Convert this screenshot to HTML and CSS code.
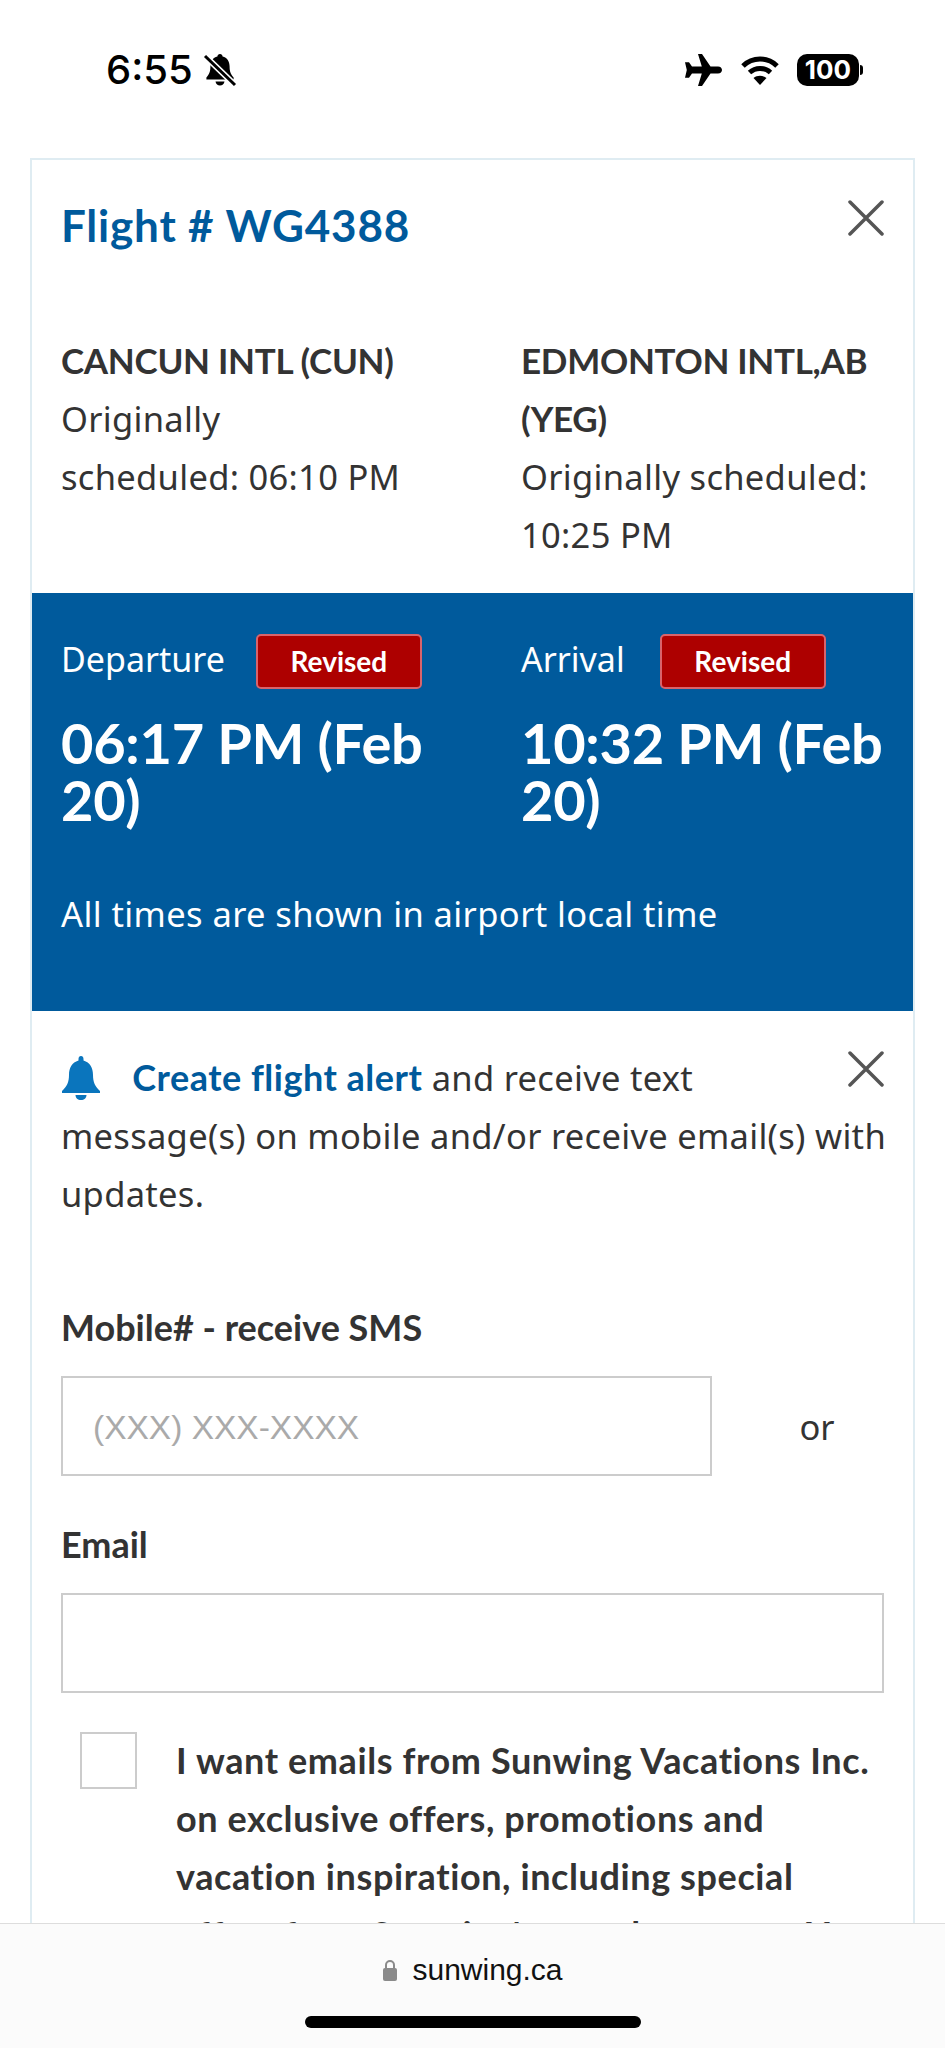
FILE: index.html
```html
<!DOCTYPE html>
<html lang="en">
  <head>
    <meta charset="UTF-8" />
    <meta name="viewport" content="width=device-width, initial-scale=1" />
    <title>Flight # WG4388</title>
    <link rel="stylesheet" href="styles.css">
  </head>
  <body>
    <header class="status-bar">
      <div class="status-left">
        <span class="clock">6:55</span>
        <svg class="icon-silent" viewBox="0 0 34 34" width="34" height="34">
          <path d="M17 1c1.500 0 2.500 1 2.600 2.400 4.600 1.200 7 5 7 10 0 5 1 7.500 4 11.100v2H3.400v-2c3-3.600 4-6.100 4-11.100 0-5 2.400-8.800 7-10C14.500 2 15.500 1 17 1zM12.500 28.500h9c-.4 2.500-2.200 4-4.500 4s-4.100-1.500-4.500-4z" fill="#000"/>
          <path d="M2 3l30 29" stroke="#fff" stroke-width="6"/>
          <path d="M2 3l30 29" stroke="#000" stroke-width="3"/>
        </svg>
      </div>
      <div class="status-right">
        <svg viewBox="0 0 40 34" width="40" height="34">
          <path d="M15 1h4l8.500 12.500H35c2.500 0 4 1.600 4 3.500s-1.500 3.500-4 3.500h-7.500L19 33h-4l3.800-12.500H9l-3 4.200H2L3.800 17 2 9.300h4L9 13.500h9.800z" fill="#000"/>
        </svg>
        <svg viewBox="0 0 40 30" width="40" height="30">
          <path d="M3 11c9.500-9.300 24.500-9.300 34 0" fill="none" stroke="#000" stroke-width="5"/>
          <path d="M9.500 17.500c6-5.400 15-5.400 21 0" fill="none" stroke="#000" stroke-width="5"/>
          <path d="M20 30l-6.500-7c3.600-3 9.400-3 13 0z" fill="#000"/>
        </svg>
        <div class="battery"><span class="battery-level">100</span><i class="battery-tip"></i></div>
      </div>
    </header>

    <main class="card">
      <div class="card-head">
        <h1>Flight # WG4388</h1>
        <svg class="close" viewBox="0 0 36 36" width="36" height="36">
          <path d="M2 2l32 32M34 2L2 34" stroke="#555" stroke-width="3.500" stroke-linecap="round"/>
        </svg>
      </div>

      <div class="route">
        <div class="route-col">
          <strong>CANCUN INTL (CUN)</strong>
          <p>Originally scheduled:&nbsp;06:10&nbsp;PM</p>
        </div>
        <div class="route-col">
          <strong>EDMONTON INTL,AB (YEG)</strong>
          <p>Originally scheduled: 10:25 PM</p>
        </div>
      </div>

      <section class="times">
        <div class="times-row">
          <div class="time-col">
            <div class="time-label"><span class="time-name">Departure</span> <span class="badge">Revised</span></div>
            <div class="time-value">06:17 PM (Feb 20)</div>
          </div>
          <div class="time-col">
            <div class="time-label"><span class="time-name">Arrival</span> <span class="badge">Revised</span></div>
            <div class="time-value">10:32 PM (Feb 20)</div>
          </div>
        </div>
        <p class="times-note">All times are shown in airport local time</p>
      </section>

      <section class="alert">
        <p class="alert-text">
          <svg class="close close-alert" viewBox="0 0 36 36" width="36" height="36">
            <path d="M2 2l32 32M34 2L2 34" stroke="#555" stroke-width="3.500" stroke-linecap="round"/>
          </svg>
          <svg class="bell" viewBox="0 0 40 44" width="40" height="44">
            <path d="M20 0c1.500 0 2.500 1.200 2.500 3v1.600C29 6.500 32 12 32 19c0 7 2 11.500 7 16v2H1v-2c5-4.500 7-9 7-16 0-7 3-12.500 9.500-14.400V3C17.500 1.200 18.500 0 20 0zM14.500 39h11c0 3-2.400 5-5.500 5s-5.500-2-5.500-5z" fill="#0a75bd"/>
          </svg>
          <a class="alert-link">Create flight alert</a> and receive text message(s) on mobile and/or receive email(s) with updates.
        </p>

        <label class="field-label">Mobile# - receive SMS</label>
        <div class="phone-row">
          <input class="input input-phone" placeholder="(XXX) XXX-XXXX" />
          <span class="or">or</span>
        </div>

        <label class="field-label">Email</label>
        <input class="input" />

        <div class="consent">
          <span class="checkbox"></span>
          <p>I want emails from Sunwing Vacations Inc. on exclusive offers, promotions and vacation inspiration, including special offers from Sunwing's travel partners. You</p>
        </div>
      </section>
    </main>

    <footer class="browser-bar">
      <div class="address">
        <svg viewBox="0 0 16 24" width="16" height="24">
          <path d="M4 11V7a4 4 0 0 1 8 0v4" fill="none" stroke="#8a8a8a" stroke-width="2"/>
          <rect x="1" y="10" width="14" height="13" rx="2" fill="#8a8a8a"/>
        </svg>
        <span>sunwing.ca</span>
      </div>
      <div class="home-bar"></div>
    </footer>
  </body>
</html>
```

FILE: styles.css
```css
html,
body {
  margin: 0;
  padding: 0;
  height: 2048px;
  overflow: hidden;
  background: #fff;
  font-family: "Noto Sans", Lato, sans-serif;
  color: #333;
}
body {
  position: relative;
}
p,
h1 {
  margin: 0;
}
strong,
h1,
.badge,
.time-value,
.alert-link,
.field-label,
.consent p {
  font-family: Lato, "Noto Sans", sans-serif;
}

.status-bar {
  display: flex;
  justify-content: space-between;
  align-items: center;
  height: 140px;
  padding: 0 82px 0 106px;
  box-sizing: border-box;
  margin-bottom: 18px;
}
.status-left,
.status-right {
  display: flex;
  align-items: center;
}
.status-left {
  gap: 10px;
}
.status-right {
  gap: 17px;
}
.clock {
  font: 500 40px/1 Inter, sans-serif;
  color: #000;
}
.battery {
  display: flex;
  align-items: center;
}
.battery-level {
  width: 62px;
  height: 32px;
  border-radius: 10px;
  background: #000;
  color: #fff;
  font: 700 26px/32px Inter, sans-serif;
  text-align: center;
}
.battery-tip {
  width: 3px;
  height: 10px;
  margin-left: 1px;
  background: #000;
  border-radius: 0 3px 3px 0;
}

.card {
  margin: 0 30px;
  border: 2px solid #dfecf2;
  border-bottom: 0;
}
.card-head {
  display: flex;
  justify-content: space-between;
  align-items: flex-start;
  padding: 37px 29px 0;
  height: 171px;
  box-sizing: border-box;
}
.card-head h1 {
  font-size: 44px;
  line-height: 56px;
  font-weight: 700;
  letter-spacing: 0.8px;
  color: #005a9c;
}
.close {
  flex: none;
  margin-top: 3px;
}

.route {
  display: grid;
  grid-template-columns: 460px 1fr;
  padding: 0 29px;
  height: 262px;
  font-size: 34.500px;
  letter-spacing: 0.3px;
  line-height: 58px;
}
.route-col strong {
  display: block;
  font-size: 35px;
  letter-spacing: -0.3px;
  color: #333;
}
.route-col p {
  margin-top: 1px;
}

.times {
  background: #005a9c;
  color: #fff;
  padding: 40px 15px 0 29px;
  height: 418px;
  box-sizing: border-box;
}
.times-row {
  display: grid;
  grid-template-columns: 460px 1fr;
}
.time-col:first-child {
  padding-right: 40px;
}
.time-label {
  display: flex;
  align-items: center;
  gap: 31px;
  font-size: 34px;
  line-height: 56px;
}
.time-col:last-child .time-label {
  gap: 35px;
}
.time-name {
  line-height: 52px;
  margin-bottom: 4px;
}
.badge {
  width: 166px;
  height: 55px;
  box-sizing: border-box;
  border: 2px solid #d9636b;
  border-radius: 5px;
  background: #ad0000;
  font-size: 28px;
  font-weight: 700;
  line-height: 51px;
  text-align: center;
}
.time-value {
  margin-top: 25px;
  font-size: 56px;
  font-weight: 700;
  line-height: 57px;
  letter-spacing: -0.300px;
}
.times-note {
  margin-top: 57px;
  font-size: 34.500px;
  letter-spacing: 0.4px;
  line-height: 58px;
}

.alert {
  padding: 37px 20px 0 29px;
}
.close-alert {
  float: right;
  margin: 3px 9px 0 60px;
}
.alert-text {
  font-size: 34.500px;
  letter-spacing: 0.3px;
  line-height: 58px;
  margin-bottom: 75px;
}
.bell {
  vertical-align: -9px;
  margin-right: 22px;
}
.alert-link {
  color: #005a9c;
  font-size: 36px;
  font-weight: 700;
  letter-spacing: 0.5px;
}
.field-label {
  display: block;
  font-size: 36px;
  font-weight: 700;
  line-height: 58px;
  margin-bottom: 20px;
}
.phone-row {
  display: flex;
  align-items: center;
  margin-bottom: 39px;
}
.input {
  display: block;
  box-sizing: border-box;
  width: 823px;
  height: 100px;
  padding: 3px 30px 0;
  border: 2px solid #ccc;
  background: #fff;
  font: 33.500px "Liberation Sans", sans-serif;
  outline: none;
}
.input::placeholder {
  color: #aaa;
}
.input-phone {
  width: 651px;
}
.or {
  width: 172px;
  padding-left: 38px;
  box-sizing: border-box;
  text-align: center;
  font-size: 34.500px;
}
.consent {
  display: flex;
  margin-top: 25px;
  padding-left: 19px;
}
.checkbox {
  flex: none;
  width: 57px;
  height: 57px;
  box-sizing: border-box;
  margin: 14px 39px 0 0;
  border: 2px solid #ccc;
}
.consent p {
  width: 700px;
  margin-top: 13px;
  font-size: 36px;
  font-weight: 700;
  line-height: 58px;
  letter-spacing: 0.6px;
}

.browser-bar {
  position: absolute;
  left: 0;
  right: 0;
  bottom: 0;
  height: 125px;
  box-sizing: border-box;
  border-top: 1px solid #ddd;
  background: #fbfbfb;
}
.address {
  display: flex;
  justify-content: center;
  align-items: center;
  gap: 14px;
  height: 92px;
  font: 30px "Liberation Sans", sans-serif;
  color: #111;
}
.home-bar {
  width: 336px;
  height: 12px;
  margin: 0 auto;
  border-radius: 6px;
  background: #000;
}
```
